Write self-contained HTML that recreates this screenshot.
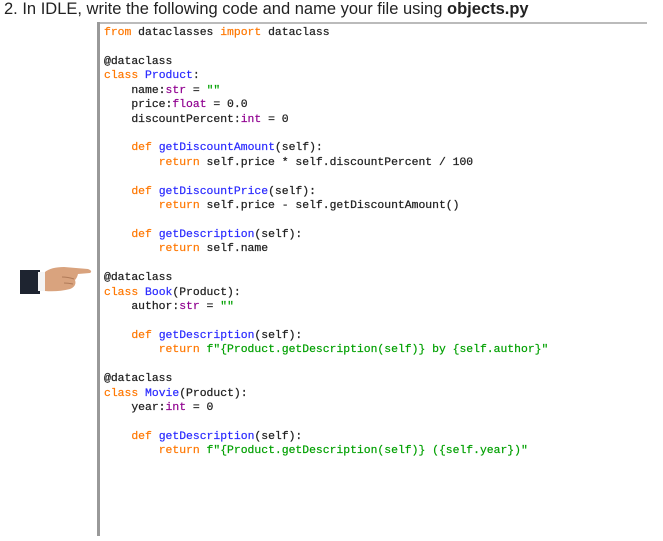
<!DOCTYPE html>
<html><head><meta charset="utf-8"><style>
body{margin:0;width:663px;height:541px;background:#fff;position:relative;overflow:hidden;font-family:"Liberation Sans",sans-serif}
.t{position:absolute;left:4px;top:0;font-size:16.5px;color:#222;white-space:nowrap;letter-spacing:0}
.bt{position:absolute;left:98px;top:22px;width:549px;height:2px;background:#bbb}
.bl{position:absolute;left:97px;top:22px;width:3px;height:514px;background:#999}
pre{position:absolute;left:104px;top:26px;margin:0;font-family:"Liberation Mono",monospace;font-size:11.4px;line-height:14.42px;color:#222;-webkit-text-stroke:0.25px #222}
.k{color:#ff7700;-webkit-text-stroke:0.2px #ff7700}.n{color:#2a2aff;-webkit-text-stroke:0.2px #2a2aff}.b{color:#900090;-webkit-text-stroke:0.2px #900090}.s{color:#00a000;-webkit-text-stroke:0.2px #00a000}
</style></head><body>
<div class="t">2. In IDLE, write the following code and name your file using <b>objects.py</b></div>
<div class="bt"></div><div class="bl"></div>
<svg style="position:absolute;left:18px;top:264px" width="80" height="34">
<rect x="2" y="6" width="20" height="24" fill="#1e2430"/>
<rect x="20" y="8" width="8" height="19" fill="#f4f4f4"/>
<path d="M27 8 Q33 3 46 3 L70 5 Q75 7 72 9 L60 10 Q59 14 57 16 Q59 22 52 25 Q40 28 27 27 Z" fill="#d9a37e"/>
<path d="M44 13 Q50 13 56 15 M46 19 Q50 19 55 20" stroke="#b07a58" stroke-width="1" fill="none"/>
</svg>
<pre><span class="k">from</span> dataclasses <span class="k">import</span> dataclass

@dataclass
<span class="k">class</span> <span class="n">Product</span>:
    name:<span class="b">str</span> = <span class="s">""</span>
    price:<span class="b">float</span> = 0.0
    discountPercent:<span class="b">int</span> = 0

    <span class="k">def</span> <span class="n">getDiscountAmount</span>(self):
        <span class="k">return</span> self.price * self.discountPercent / 100

    <span class="k">def</span> <span class="n">getDiscountPrice</span>(self):
        <span class="k">return</span> self.price - self.getDiscountAmount()

    <span class="k">def</span> <span class="n">getDescription</span>(self):
        <span class="k">return</span> self.name

@dataclass
<span class="k">class</span> <span class="n">Book</span>(Product):
    author:<span class="b">str</span> = <span class="s">""</span>

    <span class="k">def</span> <span class="n">getDescription</span>(self):
        <span class="k">return</span> <span class="s">f"{Product.getDescription(self)} by {self.author}"</span>

@dataclass
<span class="k">class</span> <span class="n">Movie</span>(Product):
    year:<span class="b">int</span> = 0

    <span class="k">def</span> <span class="n">getDescription</span>(self):
        <span class="k">return</span> <span class="s">f"{Product.getDescription(self)} ({self.year})"</span>
</pre>
</body></html>
